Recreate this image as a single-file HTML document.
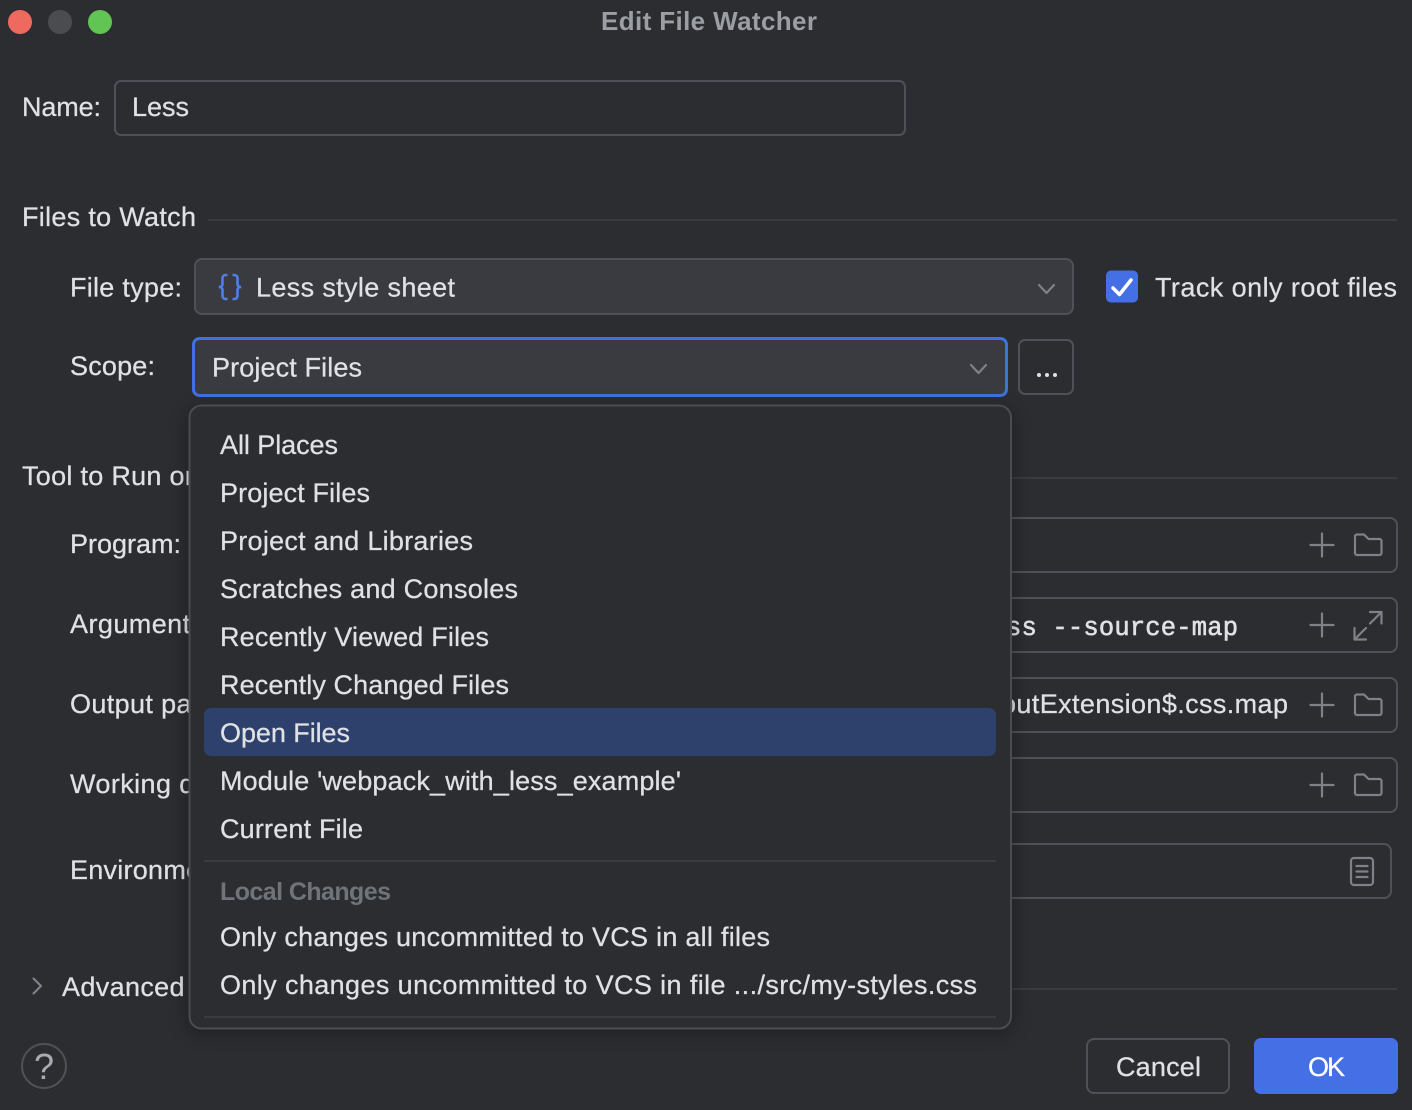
<!DOCTYPE html>
<html><head><meta charset="utf-8"><title>Edit File Watcher</title>
<style>
html,body{margin:0;padding:0;background:#2b2d30;width:1412px;height:1110px;overflow:hidden}
svg{display:block}
text{font-family:"Liberation Sans",sans-serif;font-size:27px;fill:#dfe1e5;stroke:#dfe1e5;stroke-width:.25}
.m{font-family:"Liberation Mono",monospace;font-size:25.5px;stroke-width:.6}
.b{fill:none;stroke:#4e5157;stroke-width:2}
.l{stroke:#393b40;stroke-width:2}
.i{fill:none;stroke:#7e8187;stroke-width:2.2;stroke-linecap:round;stroke-linejoin:round}
</style></head><body>
<svg width="1412" height="1110" viewBox="0 0 1412 1110" xmlns="http://www.w3.org/2000/svg">
<defs><filter id="s" x="-10%" y="-10%" width="120%" height="120%"><feGaussianBlur stdDeviation="9"/></filter></defs>
<rect width="1412" height="1110" fill="#2b2d30"/>
<circle cx="20" cy="22" r="12" fill="#ee6a5f"/><circle cx="60" cy="22" r="12" fill="#4b4c4f"/><circle cx="100" cy="22" r="12" fill="#61c454"/>
<text x="601" y="30" textLength="216" style="font-weight:700;font-size:26px;fill:#9b9ea4;stroke:none">Edit File Watcher</text>

<text x="22" y="116" textLength="79">Name:</text>
<rect x="115" y="81" width="790" height="54" rx="6" class="b"/>
<text x="132" y="116" textLength="57">Less</text>

<text x="22" y="226" textLength="174">Files to Watch</text>
<path d="M208 220H1397" class="l"/>

<text x="70" y="296.500" textLength="112">File type:</text>
<rect x="195" y="259" width="878" height="55" rx="7" fill="#393b40" stroke="#4e5157" stroke-width="2"/>
<path d="M227.500 275h-2a3 3 0 0 0-3 3v6a3 3 0 0 1-3.500 3 3 3 0 0 1 3.500 3v6a3 3 0 0 0 3 3h2M232.500 275h2a3 3 0 0 1 3 3v6a3 3 0 0 0 3.500 3 3 3 0 0 0-3.500 3v6a3 3 0 0 1-3 3h-2" fill="none" stroke="#4f7fe8" stroke-width="2.600"/>
<text x="256" y="296.500" textLength="199">Less style sheet</text>
<path d="M1039 285l7.500 8 7.500-8" class="i"/>

<rect x="1106" y="270.500" width="32" height="32" rx="5" fill="#4570e5"/>
<path d="M1113 288l6.500 6.500L1131 280" fill="none" stroke="#fff" stroke-width="3.500" stroke-linecap="round" stroke-linejoin="round"/>
<text x="1155" y="296.500" textLength="242">Track only root files</text>

<text x="70" y="375" textLength="85">Scope:</text>
<rect x="193.500" y="338.500" width="813" height="57" rx="6" fill="#393b40" stroke="#3f72de" stroke-width="3"/>
<text x="212" y="376.500" textLength="150">Project Files</text>
<path d="M971 365l7.500 8 7.500-8" class="i"/>
<rect x="1019" y="340" width="54" height="54" rx="6" class="b"/>
<circle cx="1039" cy="375" r="2" fill="#dfe1e5"/><circle cx="1047" cy="375" r="2" fill="#dfe1e5"/><circle cx="1055" cy="375" r="2" fill="#dfe1e5"/>

<text x="22" y="485" textLength="244">Tool to Run on Files</text>
<path d="M1000 478H1397" class="l"/>
<text x="70" y="553" textLength="111">Program:</text>
<text x="70" y="633" textLength="142">Arguments:</text>
<text x="70" y="713" textLength="292">Output paths to refresh:</text>
<text x="70" y="793" textLength="224">Working directory:</text>
<text x="70" y="879" textLength="280">Environment variables:</text>
<path d="M33.500 978.500l7.500 7.500-7.500 7.500" class="i"/>
<text x="62" y="996" textLength="226">Advanced Options</text>
<path d="M1000 989H1397" class="l"/>

<rect x="800" y="518" width="597" height="54" rx="7" class="b"/>
<rect x="800" y="598" width="597" height="54" rx="7" class="b"/>
<rect x="800" y="678" width="597" height="54" rx="7" class="b"/>
<rect x="800" y="758" width="597" height="54" rx="7" class="b"/>
<rect x="800" y="844" width="591" height="54" rx="7" class="b"/>

<text class="m" x="1006" y="635" textLength="232">ss --source-map</text>
<text x="1001" y="713" textLength="287">outExtension$.css.map</text>

<g transform="translate(0,-.5)"><path d="M1322 534v23M1310.500 545.500h23" class="i"/><path d="M1355 537a2 2 0 0 1 2-2h7l4.500 4.500h11a2 2 0 0 1 2 2v12a2 2 0 0 1-2 2h-22.500a2 2 0 0 1-2-2z" class="i"/></g>
<path d="M1322 613.500v23M1310.500 625h23" class="i"/>
<path d="M1370 612h11.500v11.500M1381.500 612l-11.500 11.500M1366 628l-11.500 11.500M1354.500 628v11.500H1366" class="i"/>
<g transform="translate(0,159.500)"><path d="M1322 534v23M1310.500 545.500h23" class="i"/><path d="M1355 537a2 2 0 0 1 2-2h7l4.500 4.500h11a2 2 0 0 1 2 2v12a2 2 0 0 1-2 2h-22.500a2 2 0 0 1-2-2z" class="i"/></g>
<g transform="translate(0,239.500)"><path d="M1322 534v23M1310.500 545.500h23" class="i"/><path d="M1355 537a2 2 0 0 1 2-2h7l4.500 4.500h11a2 2 0 0 1 2 2v12a2 2 0 0 1-2 2h-22.500a2 2 0 0 1-2-2z" class="i"/></g>
<rect x="1351" y="858" width="22" height="27" rx="3" class="i"/>
<path d="M1356.500 866h11M1356.500 871.500h11M1356.500 877h11" class="i"/>

<circle cx="44" cy="1066" r="22" class="b"/>
<text x="34" y="1079" style="font-size:36px;fill:#a8abb1;stroke:none">?</text>

<rect x="1087" y="1039" width="142" height="54" rx="7" class="b"/>
<text x="1116" y="1076" textLength="85">Cancel</text>
<rect x="1254" y="1038" width="144" height="56" rx="7" fill="#4570e5"/>
<text x="1308" y="1076" textLength="37" style="fill:#fff;stroke:#fff">OK</text>

<rect x="186" y="408" width="828" height="626" rx="14" fill="#000" opacity=".28" filter="url(#s)"/>
<rect x="189.500" y="405.500" width="821.500" height="623" rx="12" fill="#2b2d30" stroke="#4a4c51" stroke-width="2"/>
<rect x="204" y="708" width="792" height="48" rx="7" fill="#2e416c"/>
<text x="220" y="454" textLength="118">All Places</text>
<text x="220" y="502" textLength="150">Project Files</text>
<text x="220" y="550" textLength="253">Project and Libraries</text>
<text x="220" y="598" textLength="298">Scratches and Consoles</text>
<text x="220" y="646" textLength="269">Recently Viewed Files</text>
<text x="220" y="694" textLength="289">Recently Changed Files</text>
<text x="220" y="742" textLength="130">Open Files</text>
<text x="220" y="790" textLength="461">Module 'webpack_with_less_example'</text>
<text x="220" y="838" textLength="143">Current File</text>
<path d="M204 861H996" class="l"/>
<text x="220" y="900" textLength="171" style="font-weight:700;font-size:25px;fill:#6f737a;stroke:none">Local Changes</text>
<text x="220" y="946" textLength="550">Only changes uncommitted to VCS in all files</text>
<text x="220" y="994" textLength="757">Only changes uncommitted to VCS in file .../src/my-styles.css</text>
<path d="M204 1017H996" class="l"/>
</svg>
</body></html>
